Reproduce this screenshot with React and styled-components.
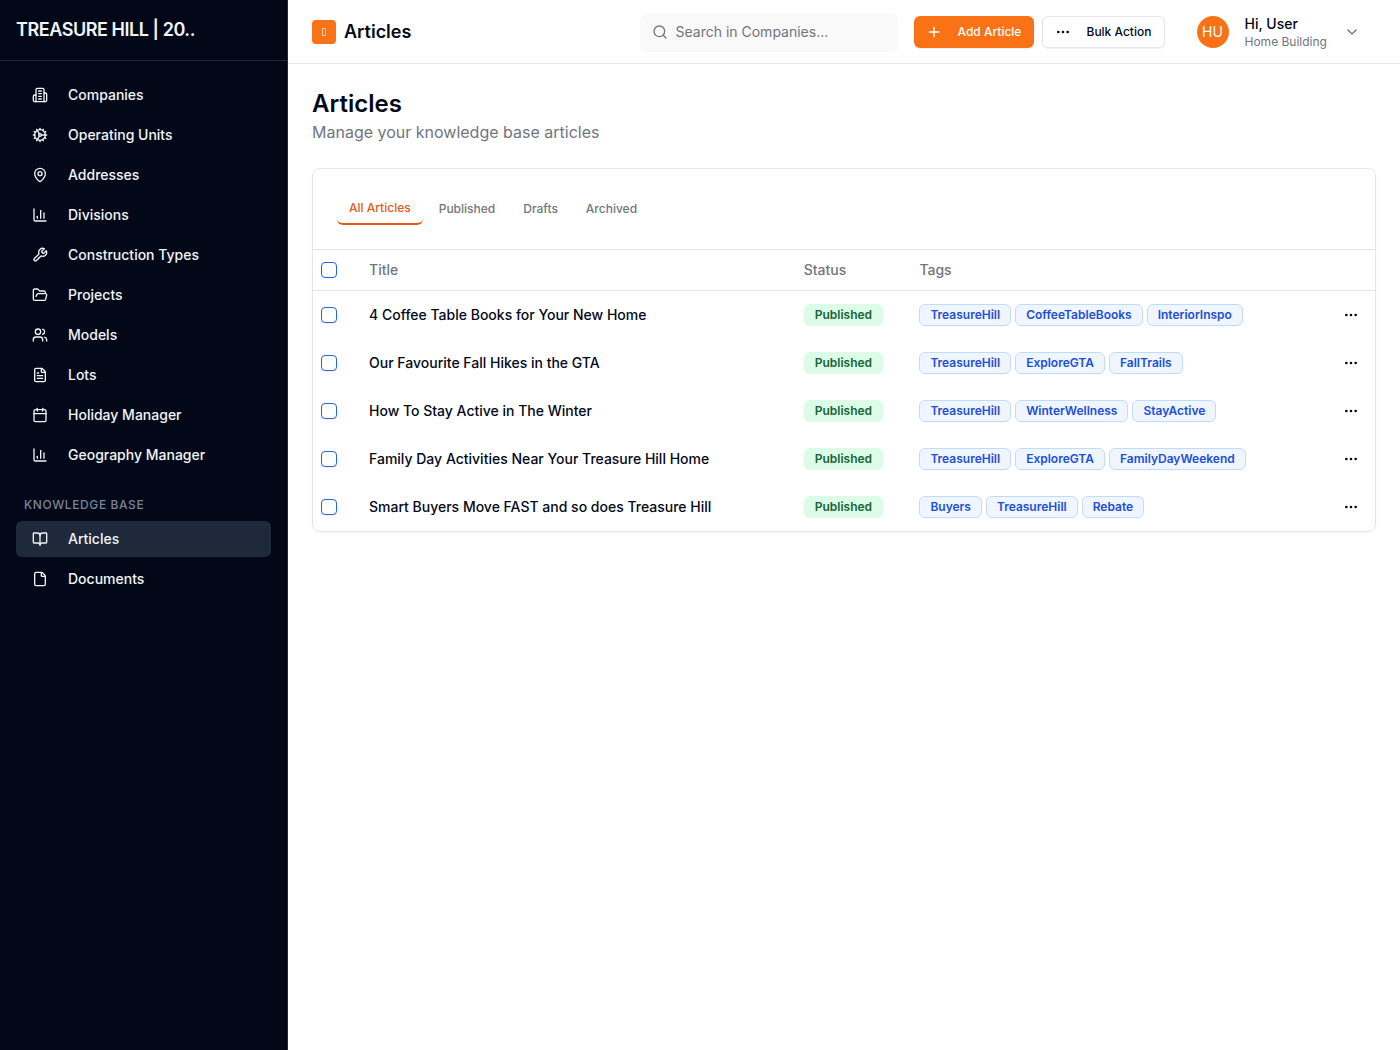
import React from "react";
import styled, { createGlobalStyle, ThemeProvider } from "styled-components";
import {
  BookOpen,
  Calendar,
  ChartColumn,
  ChevronDown,
  Cog,
  Ellipsis,
  File,
  FileText,
  FolderOpen,
  MapPin,
  Plus,
  Search,
  Users
} from "lucide-react";

const theme = {
  colors: {
    sidebar: "#020817",
    sidebarActive: "#1e293b",
    sidebarText: "#f1f5f9",
    foreground: "#020817",
    muted: "#71757d",
    border: "#e4e6e9",
    accent: "#f97316",
    accentDark: "#e05a14"
  }
};

const GlobalStyle = createGlobalStyle`
  *, *::before, *::after {
    box-sizing: border-box;
  }

  body {
    margin: 0;
    font-family: Inter, sans-serif;
    font-size: 14px;
    line-height: 20px;
    background: #fff;
  }

  button, input {
    font: inherit;
    margin: 0;
  }

  svg {
    display: block;
    flex-shrink: 0;
  }
`;

const Layout = styled.div`
  display: flex;
  height: 1050px;
  color: ${props => props.theme.colors.foreground};
`;

const Sidebar = styled.aside`
  flex: 0 0 288px;
  background: ${props => props.theme.colors.sidebar};
  border-right: 1px solid ${props => props.theme.colors.sidebarActive};
  color: ${props => props.theme.colors.sidebarText};
`;

const Brand = styled.div`
  height: 61px;
  padding: 16px;
  border-bottom: 1px solid ${props => props.theme.colors.sidebarActive};
  font-size: 18px;
  font-weight: 600;
  line-height: 28px;
  letter-spacing: -0.45px;
`;

const Nav = styled.nav`
  display: flex;
  flex-direction: column;
  gap: 4px;
  padding: 0 16px;
  margin-top: ${props => props.$top || "0"};
`;

const NavItem = styled.a`
  display: flex;
  align-items: center;
  gap: 20px;
  height: 36px;
  padding: 0 16px;
  border-radius: 6px;
  font-weight: 500;
  background: ${props =>
    props.$active ? props.theme.colors.sidebarActive : "transparent"};
`;

const NavHeading = styled.h4`
  margin: 16px 24px 0;
  padding: 8px 0;
  color: #94a3b8;
  opacity: 0.8;
  font-size: 12px;
  font-weight: 500;
  line-height: 16px;
  letter-spacing: 0.6px;
  text-transform: uppercase;
`;

const Main = styled.main`
  flex: 1;
  min-width: 0;
`;

const TopBar = styled.header`
  display: flex;
  align-items: center;
  height: 64px;
  padding: 1px 40px 0 24px;
  border-bottom: 1px solid ${props => props.theme.colors.border};
`;

const PageIcon = styled.div`
  display: flex;
  align-items: center;
  justify-content: center;
  width: 24px;
  height: 24px;
  border-radius: 4px;
  background: ${props => props.theme.colors.accent};
`;

const Glyph = styled.span`
  width: 4px;
  height: 8px;
  border: 1px solid rgba(255, 255, 255, 0.6);
`;

const PageName = styled.h1`
  flex: 1;
  margin: 0 0 0 8px;
  font-size: 18px;
  font-weight: 600;
  line-height: 28px;
`;

const SearchBox = styled.label`
  display: flex;
  align-items: center;
  gap: 8px;
  width: 258px;
  height: 38px;
  margin: 2px 16px 0 0;
  padding: 0 12px 2px;
  border-radius: 6px;
  background: #f9f9fa;
  color: ${props => props.theme.colors.muted};
`;

const SearchInput = styled.input`
  flex: 1;
  min-width: 0;
  padding: 0;
  border: 0;
  outline: 0;
  background: transparent;
  color: inherit;

  &::placeholder {
    color: inherit;
    opacity: 1;
  }
`;

const Button = styled.button`
  display: flex;
  align-items: center;
  gap: 16px;
  width: ${props => props.$width};
  height: 32px;
  padding: 0 12px;
  border: ${props =>
    props.$primary ? "0" : `1px solid ${props.theme.colors.border}`};
  border-radius: 6px;
  background: ${props => (props.$primary ? props.theme.colors.accent : "#fff")};
  color: ${props => (props.$primary ? "#fff" : props.theme.colors.foreground)};
  box-shadow: 0 1px 2px rgba(0, 0, 0, 0.06);
  font-size: 12px;
  font-weight: 500;
  line-height: 16px;
  white-space: nowrap;

  & + & {
    margin-left: 8px;
  }
`;

const UserMenu = styled.div`
  display: flex;
  align-items: center;
  margin-left: 32px;
`;

const Avatar = styled.div`
  width: 32px;
  height: 32px;
  margin-right: 16px;
  border-radius: 50%;
  background: ${props => props.theme.colors.accent};
  color: #fff;
  line-height: 32px;
  text-align: center;
`;

const UserName = styled.div`
  font-weight: 500;
`;

const UserRole = styled.div`
  color: ${props => props.theme.colors.muted};
  font-size: 12px;
  line-height: 16px;
`;

const UserInfo = styled.div`
  width: 83.5px;
  white-space: nowrap;
`;

const Chevron = styled(ChevronDown)`
  margin-left: 16px;
  color: ${props => props.theme.colors.muted};
`;

const Content = styled.section`
  padding: 24px;
`;

const Title = styled.h2`
  margin: 0;
  font-size: 24px;
  font-weight: 600;
  line-height: 32px;
`;

const Subtitle = styled.p`
  margin: 0 0 24px;
  color: ${props => props.theme.colors.muted};
  font-size: 16px;
  line-height: 24px;
`;

const Card = styled.div`
  border: 1px solid ${props => props.theme.colors.border};
  border-radius: 8px;
  box-shadow: 0 1px 2px rgba(0, 0, 0, 0.05);
`;

const Tabs = styled.div`
  display: flex;
  gap: 4px;
  height: 80px;
  padding: 24px;
`;

const Tab = styled.button`
  height: 32px;
  padding: 0 12px;
  border: 0;
  border-bottom: ${props => (props.$active ? "2px solid" : "0")};
  border-radius: 6px;
  background: transparent;
  color: ${props =>
    props.$active ? props.theme.colors.accentDark : props.theme.colors.muted};
  font-size: 12px;
  font-weight: 500;
  line-height: 16px;
`;

const Row = styled.div`
  display: grid;
  grid-template-columns: 48px 434.7px 115.7px 1fr 32px;
  align-items: center;
  height: ${props => (props.$head ? "42px" : "48px")};
  padding: 0 8px;
  border: 0 solid ${props => props.theme.colors.border};
  border-width: ${props => (props.$head ? "1px 0" : "0")};
  color: ${props => (props.$head ? props.theme.colors.muted : "inherit")};
  font-weight: 500;
`;

const Checkbox = styled.button`
  width: 16px;
  height: 16px;
  padding: 0;
  border: 1px solid #2563eb;
  border-radius: 4px;
  background: #fff;
  box-shadow: 0 1px 2px rgba(0, 0, 0, 0.05);
`;

const Badges = styled.div`
  display: flex;
  gap: 4px;
`;

const Badge = styled.span`
  padding: 2px 10px;
  border: 1px solid ${props => (props.$status ? "#dcfce7" : "#bfdbfe")};
  border-radius: 6px;
  background: ${props => (props.$status ? "#dcfce7" : "#eff6ff")};
  color: ${props => (props.$status ? "#166534" : "#1d4ed8")};
  font-size: 12px;
  font-weight: 600;
  line-height: 16px;
`;

const RowAction = styled.button`
  display: flex;
  align-items: center;
  justify-content: center;
  width: 32px;
  height: 32px;
  padding: 0;
  border: 0;
  background: transparent;
  color: inherit;
`;

const Building = ({ size }) => (
  <svg
    width={size}
    height={size}
    viewBox="0 0 24 24"
    fill="none"
    stroke="currentColor"
    strokeWidth="2"
    strokeLinecap="round"
    strokeLinejoin="round"
  >
    <path d="M6 22V4a2 2 0 0 1 2-2h8a2 2 0 0 1 2 2v18Z" />
    <path d="M6 12H4a2 2 0 0 0-2 2v6a2 2 0 0 0 2 2h2" />
    <path d="M18 9h2a2 2 0 0 1 2 2v9a2 2 0 0 1-2 2h-2" />
    <path d="M10 6h4M10 10h4M10 14h4M10 18h4" />
  </svg>
);

const Wrench = ({ size }) => (
  <svg
    width={size}
    height={size}
    viewBox="0 0 24 24"
    fill="none"
    stroke="currentColor"
    strokeWidth="2"
    strokeLinecap="round"
    strokeLinejoin="round"
  >
    <path d="M14.7 6.3a1 1 0 0 0 0 1.4l1.6 1.6a1 1 0 0 0 1.4 0l3.77-3.77a6 6 0 0 1-7.94 7.94l-6.91 6.91a2.12 2.12 0 0 1-3-3l6.91-6.91a6 6 0 0 1 7.94-7.94l-3.76 3.76z" />
  </svg>
);

const mainLinks = [
  { label: "Companies", icon: Building },
  { label: "Operating Units", icon: Cog },
  { label: "Addresses", icon: MapPin },
  { label: "Divisions", icon: ChartColumn },
  { label: "Construction Types", icon: Wrench },
  { label: "Projects", icon: FolderOpen },
  { label: "Models", icon: Users },
  { label: "Lots", icon: FileText },
  { label: "Holiday Manager", icon: Calendar },
  { label: "Geography Manager", icon: ChartColumn }
];

const knowledgeLinks = [
  { label: "Articles", icon: BookOpen, active: true },
  { label: "Documents", icon: File }
];

const tabs = ["All Articles", "Published", "Drafts", "Archived"];

const articles = [
  {
    title: "4 Coffee Table Books for Your New Home",
    tags: ["TreasureHill", "CoffeeTableBooks", "InteriorInspo"]
  },
  {
    title: "Our Favourite Fall Hikes in the GTA",
    tags: ["TreasureHill", "ExploreGTA", "FallTrails"]
  },
  {
    title: "How To Stay Active in The Winter",
    tags: ["TreasureHill", "WinterWellness", "StayActive"]
  },
  {
    title: "Family Day Activities Near Your Treasure Hill Home",
    tags: ["TreasureHill", "ExploreGTA", "FamilyDayWeekend"]
  },
  {
    title: "Smart Buyers Move FAST and so does Treasure Hill",
    tags: ["Buyers", "TreasureHill", "Rebate"]
  }
];

const NavLinks = ({ links, top }) => (
  <Nav $top={top}>
    {links.map(({ label, icon: Icon, active }) => (
      <NavItem key={label} $active={active}>
        <Icon size={16} />
        {label}
      </NavItem>
    ))}
  </Nav>
);

const App = () => (
  <ThemeProvider theme={theme}>
    <GlobalStyle />
    <Layout>
      <Sidebar>
        <Brand>TREASURE HILL | 20..</Brand>
        <NavLinks links={mainLinks} top="16px" />
        <NavHeading>Knowledge Base</NavHeading>
        <NavLinks links={knowledgeLinks} />
      </Sidebar>
      <Main>
        <TopBar>
          <PageIcon>
            <Glyph />
          </PageIcon>
          <PageName>Articles</PageName>
          <SearchBox>
            <Search size={16} />
            <SearchInput placeholder="Search in Companies..." />
          </SearchBox>
          <Button $primary $width="120px">
            <Plus size={16} />
            Add Article
          </Button>
          <Button $width="123px">
            <Ellipsis size={16} />
            Bulk Action
          </Button>
          <UserMenu>
            <Avatar>HU</Avatar>
            <UserInfo>
              <UserName>Hi, User</UserName>
              <UserRole>Home Building</UserRole>
            </UserInfo>
            <Chevron size={16} />
          </UserMenu>
        </TopBar>
        <Content>
          <Title>Articles</Title>
          <Subtitle>Manage your knowledge base articles</Subtitle>
          <Card>
            <Tabs>
              {tabs.map((tab, i) => (
                <Tab key={tab} $active={i === 0}>
                  {tab}
                </Tab>
              ))}
            </Tabs>
            <Row $head>
              <Checkbox />
              <span>Title</span>
              <span>Status</span>
              <span>Tags</span>
            </Row>
            {articles.map(({ title, tags }) => (
              <Row key={title}>
                <Checkbox />
                <span>{title}</span>
                <Badges>
                  <Badge $status>Published</Badge>
                </Badges>
                <Badges>
                  {tags.map(tag => (
                    <Badge key={tag}>{tag}</Badge>
                  ))}
                </Badges>
                <RowAction>
                  <Ellipsis size={16} />
                </RowAction>
              </Row>
            ))}
          </Card>
        </Content>
      </Main>
    </Layout>
  </ThemeProvider>
);

export default App;
